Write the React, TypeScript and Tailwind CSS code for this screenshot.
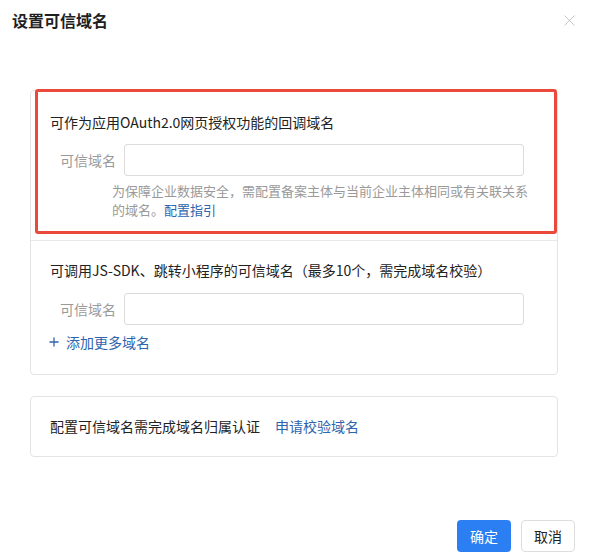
import { X, Plus } from 'lucide-react';

const font = { fontFamily: '"Noto Sans CJK SC", "Noto Sans", sans-serif' };

function DomainInput() {
    return (
        <div className="flex items-center">
            <span className="w-[66px] text-right text-[14px] text-[#9a9a9a] leading-5">可信域名</span>
            <input className="ml-[8px] w-[400px] h-[32px] rounded-[3px] border border-[#dcdcdc] bg-white outline-none px-2 text-[14px]" />
        </div>
    );
}

export default function App() {
    return (
        <div className="relative w-[594px] h-[556px] bg-white text-[#222] overflow-hidden" style={font}>
            {/* Header */}
            <div className="flex items-center justify-between h-[40px] pl-[12px] pr-[15px]">
                <h1 className="text-[16px] font-bold leading-5 text-[#1f1f1f]">设置可信域名</h1>
                <X size={19} strokeWidth={0.9} className="text-[#b0b0b0]" />
            </div>

            {/* Domain card */}
            <div className="ml-[30px] mt-[50px] w-[528px] border border-[#e4e4e4] rounded-[4px]">
                <div className="pl-[19px] pt-[21px] pb-[21px]">
                    <p className="text-[14px] leading-5">可作为应用OAuth2.0网页授权功能的回调域名</p>
                    <div className="mt-[12px]">
                        <DomainInput />
                    </div>
                    <p className="mt-[5px] ml-[62px] w-[420px] text-[13px] leading-[19px] text-[#9a9a9a]">
                        为保障企业数据安全，需配置备案主体与当前企业主体相同或有关联关系的域名。<span className="text-[#2c64ad]">配置指引</span>
                    </p>
                </div>
                <div className="border-t border-[#e8e8e8] pl-[19px] pt-[19px] pb-[22px]">
                    <p className="text-[14px] leading-5">可调用JS-SDK、跳转小程序的可信域名（最多10个，需完成域名校验）</p>
                    <div className="mt-[13px]">
                        <DomainInput />
                    </div>
                    <div className="mt-[7px] -ml-[3px] flex items-center gap-[5px] text-[14px] leading-5 text-[#2c64ad]">
                        <Plus size={14} strokeWidth={2.2} />
                        <span>添加更多域名</span>
                    </div>
                </div>
            </div>

            {/* Verification card */}
            <div className="ml-[30px] mt-[21px] w-[528px] h-[61px] border border-[#e4e4e4] rounded-[4px] flex items-center pl-[19px] text-[14px]">
                <span>配置可信域名需完成域名归属认证</span>
                <span className="ml-[15px] text-[#2c64ad]">申请校验域名</span>
            </div>

            {/* Footer */}
            <div className="absolute right-[19px] bottom-[4px] flex gap-[10px]">
                <button className="w-[54px] h-[32px] rounded-[4px] bg-[#2b7ff3] text-white text-[14px]">确定</button>
                <button className="w-[54px] h-[32px] rounded-[4px] border border-[#dcdcdc] bg-white text-[#222] text-[14px]">取消</button>
            </div>

            {/* Annotation highlight */}
            <div className="absolute left-[35px] top-[89px] w-[522px] h-[145px] border-[3px] border-[#ea4a3c] rounded-[3px] pointer-events-none" />
        </div>
    );
}
